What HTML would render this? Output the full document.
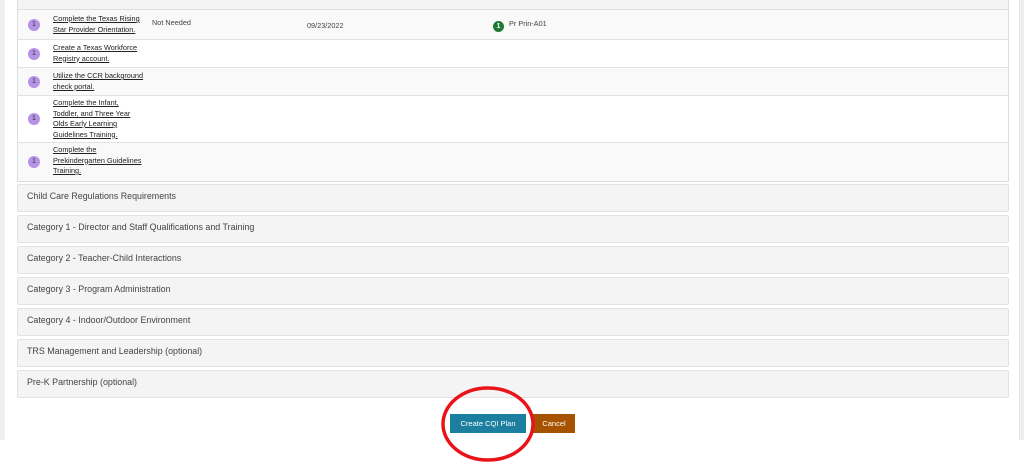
<!DOCTYPE html>
<html><head><style>
*{margin:0;padding:0;box-sizing:border-box}
body{width:1024px;height:469px;background:#fff;font-family:"Liberation Sans",sans-serif;position:relative;overflow:hidden}
.lstrip{position:absolute;left:0;top:0;width:5px;height:440px;background:#f0f0f0}
.rstrip{position:absolute;right:0;top:0;width:5px;height:440px;background:#eeeeee;border-left:1px solid #e4e4e4}
.tbl{position:absolute;left:17px;top:0;width:992px;height:182px;border:1px solid #ddd;border-top:none}
.hdr{height:10px;background:#f4f4f4;border-bottom:1px solid #ddd}
.row{position:relative;border-bottom:1px solid #e2e2e2}
.c{position:absolute;left:10px;width:12px;height:12px;border-radius:50%;background:#b592e6;color:#333;font-size:7px;text-align:center;line-height:12px}
.t{position:absolute;left:35px;font-size:7.3px;line-height:10.5px;color:#222;text-decoration:underline;width:95px}
.s{position:absolute;font-size:7.3px;color:#444}
.g{position:absolute;left:475px;top:11px;width:11px;height:11px;border-radius:50%;background:#1f7a33;color:#fff;font-size:7px;font-weight:bold;text-align:center;line-height:11px}
.p{position:absolute;left:17px;width:992px;height:28px;background:#f4f4f4;border:1px solid #e2e2e2;border-radius:2px;font-size:8.9px;color:#444;padding:6px 0 0 9px}
.btn{position:absolute;top:414px;height:19px;color:#fff;font-size:7.5px;text-align:center;line-height:19px}
</style></head><body>
<div class="lstrip"></div><div class="rstrip"></div>
<div class="tbl">
<div class="hdr"></div>
<div style="position:relative">
<div class="row" style="height:30px;background:#f9f9f9"><div class="c" style="top:9px">1</div><div class="t" style="top:4px">Complete the Texas Rising Star Provider Orientation.</div><div class="s" style="left:134px;top:8px">Not Needed</div><div class="s" style="left:289px;top:11px">09/23/2022</div><div class="g">1</div><div class="s" style="left:491px;top:9px">Pr Prin-A01</div></div>
<div class="row" style="height:28px;background:#fff"><div class="c" style="top:8px">1</div><div class="t" style="top:3px">Create a Texas Workforce Registry account.</div></div>
<div class="row" style="height:28px;background:#f9f9f9"><div class="c" style="top:8px">1</div><div class="t" style="top:3px">Utilize the CCR background check portal.</div></div>
<div class="row" style="height:47px;background:#fff"><div class="c" style="top:17px">1</div><div class="t" style="top:2px;width:90px">Complete the Infant, Toddler, and Three Year Olds Early Learning Guidelines Training.</div></div>
<div class="row" style="height:38px;background:#f9f9f9;border-bottom:none"><div class="c" style="top:13px">1</div><div class="t" style="top:2px">Complete the Prekindergarten Guidelines Training.</div></div>
</div></div>
<div class="p" style="top:184px">Child Care Regulations Requirements</div>
<div class="p" style="top:215px">Category 1 - Director and Staff Qualifications and Training</div>
<div class="p" style="top:246px">Category 2 - Teacher-Child Interactions</div>
<div class="p" style="top:277px">Category 3 - Program Administration</div>
<div class="p" style="top:308px">Category 4 - Indoor/Outdoor Environment</div>
<div class="p" style="top:339px">TRS Management and Leadership (optional)</div>
<div class="p" style="top:370px">Pre-K Partnership (optional)</div>
<div class="btn" style="left:450px;width:76px;background:#1d7fa0">Create CQI Plan</div>
<div class="btn" style="left:533px;width:42px;background:#a65200">Cancel</div>
<svg style="position:absolute;left:0;top:0" width="1024" height="469"><ellipse cx="488" cy="424" rx="45" ry="36" fill="none" stroke="#e8141a" stroke-width="3.5"/></svg>
</body></html>
